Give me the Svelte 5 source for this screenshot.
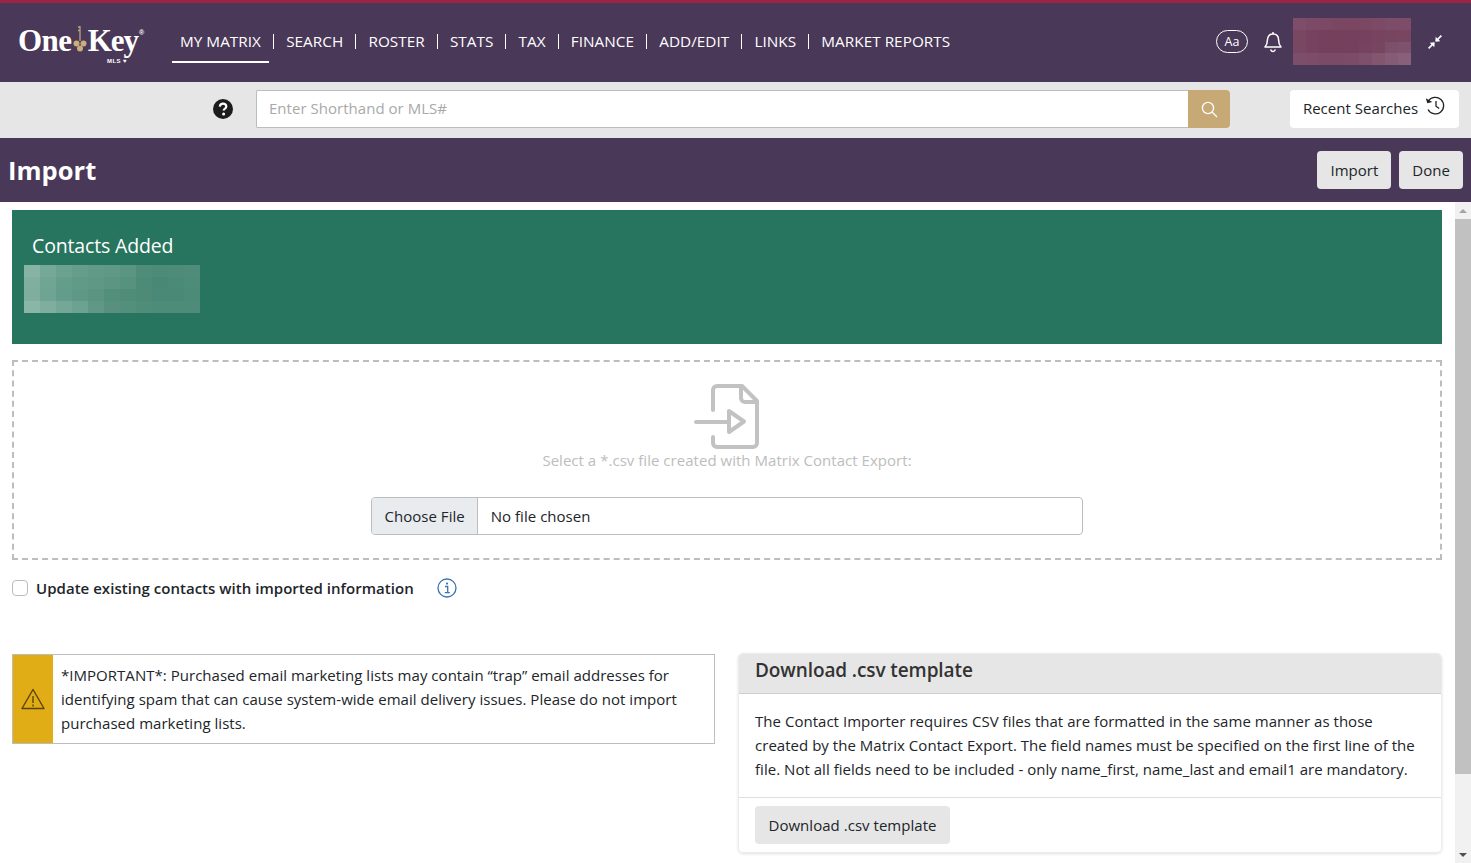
<script>
  const navItems = ['MY MATRIX', 'SEARCH', 'ROSTER', 'STATS', 'TAX', 'FINANCE', 'ADD/EDIT', 'LINKS', 'MARKET REPORTS'];

  // the redacted areas of the page are pixelated blocks, so draw them as a coarse mosaic
  const greenRows = [
    ['#86b3a4', '#76a898', '#6aa18f', '#659c8a', '#629a88', '#5f9885', '#5a9581', '#4f8d79', '#4c8b77', '#4e8c79', '#4f8d7a'],
    ['#80ae9f', '#70a493', '#659d8b', '#629a88', '#5f9986', '#5c9683', '#56927e', '#4c8b77', '#498974', '#4b8a76', '#4d8c78'],
    ['#7fae9e', '#6fa392', '#639c8a', '#5f9986', '#5b9582', '#53907c', '#4f8d79', '#4d8b77', '#4a8975', '#4a8975', '#4c8b77'],
    ['#8ab6a8', '#7fae9f', '#75a796', '#6ca291', '#5f9885', '#588f7e', '#53907c', '#4f8d79', '#4d8c78', '#4d8c78', '#4e8c79']
  ];
  const plumRows = [
    ['#7d4d69', '#7b4a66', '#7b4965', '#7a4763', '#7a4662', '#7b4864', '#7c4a66', '#7d4d68', '#7c4c68'],
    ['#7a4763', '#77425f', '#75405d', '#74405c', '#75405d', '#76415e', '#77435f', '#784561', '#794662'],
    ['#7a4763', '#77425f', '#75405d', '#74405c', '#75405d', '#77425f', '#784561', '#7c4f6b', '#7e526d'],
    ['#7d4e6a', '#7c4c68', '#7b4a66', '#7b4a66', '#7c4b67', '#7e506b', '#82566f', '#855b75', '#886079']
  ];
</script>

<div class="page">
  <nav class="topnav">
    <div class="logo">
      <span>One</span>
      <svg class="key" width="16" height="30" viewBox="1 0 16 30" aria-hidden="true">
        <path d="M9 1v15M7 2h2M7 5.500h2" stroke="#b9a47c" stroke-width="1.300" fill="none" />
        <circle cx="5.500" cy="18.500" r="3" fill="#c9ae7c" />
        <circle cx="12.500" cy="18.500" r="3" fill="#c9ae7c" />
        <circle cx="9" cy="23.500" r="3" fill="#c9ae7c" />
      </svg>
      <span class="key-word">Key</span>
      <span class="reg">®</span>
      <span class="mls">MLS ♥</span>
    </div>
    <ul class="menu">
      {#each navItems as item, i}
        <li class:active={i === 0}><span>{item}</span></li>
      {/each}
    </ul>
    <div class="nav-right">
      <span class="aa">Aa</span>
      <svg class="bell" width="20" height="22" viewBox="0 0 20 22" fill="none" stroke="#fff" stroke-width="1.500" aria-hidden="true">
        <path d="M10 3c-3.600 0-5.600 2.600-5.600 6 0 4-.9 5.400-2.400 7h16c-1.500-1.600-2.400-3-2.400-7 0-3.400-2-6-5.600-6z" stroke-linejoin="round" />
        <path d="M10 1v2" />
        <path d="M7.600 18.500c.5 1.300 1.400 2 2.400 2s1.900-.7 2.400-2" />
      </svg>
      <div class="mosaic avatar-blur">
        {#each plumRows as row}
          {#each row as c}
            <i style="background:{c}"></i>
          {/each}
        {/each}
      </div>
      <svg class="collapse" width="16" height="16" viewBox="0 0 16 16" fill="#fff" aria-hidden="true">
        <path d="M15 2.200 13.800 1 10.400 4.400 8.700 2.800 8.300 7.700 13.200 7.300 11.600 5.600z" />
        <path d="M1 13.800 2.200 15 5.600 11.600 7.300 13.200 7.700 8.300 2.800 8.700 4.400 10.400z" />
      </svg>
    </div>
  </nav>

  <div class="searchbar">
    <svg class="help" width="20" height="20" viewBox="0 0 20 20" aria-hidden="true">
      <circle cx="10" cy="10" r="10" fill="#1c1c1c" />
      <path d="M6.800 7.600c.2-1.900 1.500-2.900 3.300-2.900 1.900 0 3.200 1.100 3.200 2.700 0 1.300-.8 1.900-1.600 2.500-.7.500-1 .8-1 1.600" fill="none" stroke="#fff" stroke-width="2.200" />
      <circle cx="10.600" cy="15" r="1.500" fill="#fff" />
    </svg>
    <div class="search-group">
      <input type="text" placeholder="Enter Shorthand or MLS#" />
      <button type="button" class="search-btn" aria-label="Search">
        <svg width="17" height="17" viewBox="0 0 17 17" fill="none" stroke="#fff" stroke-width="1.300" aria-hidden="true">
          <circle cx="7" cy="7" r="5.600" />
          <path d="M11 11l5 5" />
        </svg>
      </button>
    </div>
    <button type="button" class="recent">
      Recent Searches
      <svg width="22" height="20" viewBox="0 0 22 20" fill="none" stroke="#222" stroke-width="1.300" aria-hidden="true">
        <path d="M4.300 5.200A8.300 8.300 0 1 1 4 13.500" />
        <path d="M1.800 2.200 3.300 7.300 8.300 6z" fill="#222" stroke="none" />
        <path d="M12 5v5.200l3.200 2.400" />
      </svg>
    </button>
  </div>

  <header class="pagehead">
    <h1>Import</h1>
    <div class="head-actions">
      <button type="button">Import</button>
      <button type="button">Done</button>
    </div>
  </header>

  <div class="scroller">
    <main class="content">
      <section class="added">
        <h2>Contacts Added</h2>
        <div class="mosaic added-blur">
          {#each greenRows as row}
            {#each row as c}
              <i style="background:{c}"></i>
            {/each}
          {/each}
        </div>
      </section>

      <section class="dropzone">
        <svg class="file-icon" width="66" height="66" viewBox="0 0 66 66" fill="none" stroke="#c2c2c2" stroke-width="4" stroke-linejoin="round" stroke-linecap="round" aria-hidden="true">
          <path d="M19 26V6a4 4 0 0 1 4-4h25l15 15v42a4 4 0 0 1-4 4H23a4 4 0 0 1-4-4v-6" />
          <path d="M47 2v12a4 4 0 0 0 4 4h12" />
          <path d="M2 38h32" />
          <path d="M35 27v21l15-10.500z" />
        </svg>
        <p>Select a *.csv file created with Matrix Contact Export:</p>
        <div class="filepicker">
          <span class="choose">Choose File</span>
          <span class="chosen">No file chosen</span>
        </div>
      </section>

      <div class="update-row">
        <span class="check"></span>
        <span class="update-label">Update existing contacts with imported information</span>
        <svg width="20" height="20" viewBox="0 0 20 20" aria-hidden="true">
          <circle cx="10" cy="10" r="9" fill="none" stroke="#3a72b5" stroke-width="1.300" />
          <circle cx="10" cy="5.600" r="1.100" fill="#3a72b5" />
          <path d="M8 8.500h2.700v6M7.800 14.700h5" fill="none" stroke="#3a72b5" stroke-width="1.300" />
        </svg>
      </div>

      <div class="columns">
        <div class="warning">
          <div class="warn-side">
            <svg width="24" height="22" viewBox="0 0 24 22" fill="none" stroke="#5b430c" stroke-width="1.400" stroke-linejoin="round" aria-hidden="true">
              <path d="M12 1.500 1 20.500h22z" />
              <path d="M12 8v7M12 16.500v2" />
            </svg>
          </div>
          <p>*IMPORTANT*: Purchased email marketing lists may contain “trap” email addresses for identifying spam that can cause system-wide email delivery issues. Please do not import purchased marketing lists.</p>
        </div>

        <div class="card">
          <h3>Download .csv template</h3>
          <p>The Contact Importer requires CSV files that are formatted in the same manner as those created by the Matrix Contact Export. The field names must be specified on the first line of the file. Not all fields need to be included - only name_first, name_last and email1 are mandatory.</p>
          <div class="card-foot">
            <button type="button">Download .csv template</button>
          </div>
        </div>
      </div>
    </main>

    <div class="scrollbar">
      <span class="arrow up"></span>
      <div class="track"><div class="thumb"></div></div>
      <span class="arrow down"></span>
    </div>
  </div>
</div>

<style>
  :global(body) {
    margin: 0;
    background: #fff;
    overflow: hidden;
  }
  .page {
    height: 863px;
    display: flex;
    flex-direction: column;
    font-family: "Open Sans", "Noto Sans", "Liberation Sans", sans-serif;
    font-size: 15px;
    color: #212529;
    letter-spacing: 0.03px;
  }
  button {
    font: inherit;
    letter-spacing: inherit;
    cursor: pointer;
  }
  .mosaic {
    display: grid;
    grid-template-rows: repeat(4, 1fr);
    flex: none;
  }
  .mosaic i {
    display: block;
  }

  /* top nav */
  .topnav {
    height: 79px;
    flex: none;
    border-top: 3px solid #9c2542;
    background: #4a3858;
    display: flex;
    align-items: center;
    color: #fff;
  }
  .logo {
    position: relative;
    width: 172px;
    padding-left: 18px;
    box-sizing: border-box;
    display: flex;
    align-items: center;
    font-family: "Liberation Serif", serif;
    font-weight: 700;
    font-size: 31px;
    line-height: 26px;
    letter-spacing: -0.5px;
    height: 40px;
    margin-bottom: 4px;
  }
  .key {
    margin: -2px 0 0;
    flex: none;
  }
  .key-word {
    letter-spacing: -1px;
  }
  .reg {
    font-size: 7px;
    line-height: 8px;
    align-self: flex-start;
    margin: 8px 0 0 1px;
    font-family: "Liberation Sans", sans-serif;
  }
  .mls {
    position: absolute;
    left: 107px;
    top: 37px;
    font-family: "Liberation Sans", sans-serif;
    font-size: 6px;
    line-height: 6px;
    letter-spacing: 0.4px;
  }
  .menu {
    list-style: none;
    margin: 0;
    padding: 0;
    display: flex;
    flex: 1;
    align-items: center;
  }
  .menu li {
    height: 40px;
    margin-top: 1px;
    padding: 0 8px 5px;
    box-sizing: border-box;
    display: flex;
    align-items: center;
    position: relative;
    margin-right: 9.200px;
    font-size: 15.300px;
    white-space: nowrap;
  }
  .menu li:not(:last-child)::after {
    content: "";
    position: absolute;
    right: -5px;
    top: 11px;
    height: 15px;
    width: 1px;
    background: #fff;
  }
  .menu li.active {
    border-bottom: 2px solid #fff;
    padding-bottom: 3px;
  }
  .nav-right {
    display: flex;
    align-items: center;
    padding-right: 28px;
    margin-bottom: 2px;
  }
  .aa {
    width: 32px;
    height: 23px;
    box-sizing: border-box;
    border: 1px solid #fff;
    border-radius: 12px;
    display: flex;
    align-items: center;
    justify-content: center;
    font-size: 12.500px;
  }
  .bell {
    margin-left: 15px;
  }
  .avatar-blur {
    width: 118px;
    height: 47px;
    margin-left: 10px;
    grid-template-columns: repeat(9, 1fr);
  }
  .collapse {
    margin-left: 16px;
  }

  /* search row */
  .searchbar {
    height: 56px;
    flex: none;
    background: #e6e6e6;
    display: flex;
    align-items: center;
    padding: 0 12px 2px 213px;
    box-sizing: border-box;
  }
  .help {
    flex: none;
  }
  .search-group {
    margin-left: 23px;
    width: 974px;
    height: 38px;
    display: flex;
  }
  .search-group input {
    flex: 1;
    min-width: 0;
    box-sizing: border-box;
    border: 1px solid #bdbdbd;
    border-right: none;
    border-radius: 2px 0 0 2px;
    padding: 0 12px 2px;
    font: inherit;
    letter-spacing: inherit;
    outline: none;
    background: #fff;
  }
  .search-group input::placeholder {
    color: #a9a9a9;
    opacity: 1;
  }
  .search-btn {
    width: 42px;
    border: none;
    background: #c6a975;
    border-radius: 0 4px 4px 0;
    padding: 0;
    display: flex;
    align-items: center;
    justify-content: center;
  }
  .recent {
    margin-left: auto;
    width: 169px;
    height: 38px;
    border: none;
    background: #fff;
    border-radius: 4px;
    color: #212529;
    display: flex;
    align-items: center;
    justify-content: center;
    gap: 6px;
    padding: 0 0 3px;
  }
  .recent svg {
    margin-top: -3px;
  }

  /* page header */
  .pagehead {
    height: 64px;
    flex: none;
    background: #4a3858;
    display: flex;
    align-items: center;
    justify-content: space-between;
    padding: 0 8px;
    box-sizing: border-box;
  }
  h1 {
    margin: 0;
    font-size: 25.500px;
    font-weight: 700;
    color: #fff;
  }
  .head-actions {
    display: flex;
    gap: 8px;
  }
  .head-actions button {
    height: 38px;
    padding: 0 13px 1px;
    border: none;
    border-radius: 4px;
    background: #e6e6e6;
    color: #212529;
  }

  /* body */
  .scroller {
    flex: 1;
    min-height: 0;
    display: flex;
    overflow: hidden;
  }
  .content {
    flex: 1;
    min-width: 0;
    padding: 8px 13px 0 12px;
    box-sizing: border-box;
  }
  .added {
    background: #27755e;
    height: 134px;
    color: #fff;
    padding: 24px 12px 0;
    box-sizing: border-box;
  }
  .added h2 {
    margin: 0 0 7px 8px;
    font-size: 19.500px;
    line-height: 24px;
    font-weight: 400;
    letter-spacing: -0.15px;
  }
  .added-blur {
    width: 176px;
    height: 48px;
    grid-template-columns: repeat(11, 1fr);
  }
  .dropzone {
    margin-top: 16px;
    height: 200px;
    box-sizing: border-box;
    border: 2px dashed #bdbdbd;
    display: flex;
    flex-direction: column;
    align-items: center;
    padding-top: 22px;
  }
  .file-icon {
    flex: none;
  }
  .dropzone p {
    margin: -2px 0 0;
    line-height: 24px;
    color: #bdbdbd;
  }
  .filepicker {
    margin-top: 25px;
    width: 712px;
    height: 38px;
    box-sizing: border-box;
    border: 1px solid #bdbdbd;
    border-radius: 4px;
    display: flex;
    align-items: center;
    overflow: hidden;
  }
  .choose {
    height: 100%;
    padding: 0 12.500px;
    display: flex;
    align-items: center;
    background: #e9ecef;
    border-right: 1px solid #bdbdbd;
  }
  .chosen {
    padding-left: 12.500px;
  }
  .update-row {
    margin-top: 17px;
    height: 22px;
    display: flex;
    align-items: center;
  }
  .check {
    width: 16px;
    height: 16px;
    box-sizing: border-box;
    border: 1px solid #bdbdbd;
    border-radius: 4px;
    margin-right: 8px;
    flex: none;
  }
  .update-label {
    font-weight: 600;
    margin-right: 23px;
  }
  .columns {
    margin-top: 55px;
    display: grid;
    grid-template-columns: 703px 704px;
    gap: 23px;
    align-items: start;
  }
  .warning {
    height: 90px;
    box-sizing: border-box;
    border: 1px solid #bdbdbd;
    display: flex;
  }
  .warn-side {
    width: 40px;
    flex: none;
    background: #e0ad16;
    display: flex;
    align-items: center;
    justify-content: center;
  }
  .warning p {
    margin: 0;
    padding: 8px 20px 0 8px;
    line-height: 24px;
  }
  .card {
    border-radius: 5px;
    border: 1px solid #ececec;
    box-shadow: 0 1px 3px rgba(0, 0, 0, 0.12);
    overflow: hidden;
    margin-top: -1px;
  }
  .card h3 {
    margin: 0;
    height: 39px;
    background: #e6e6e6;
    border-bottom: 1px solid #cfcfcf;
    padding: 0 16px;
    font-size: 19px;
    font-weight: 600;
    line-height: 32px;
    letter-spacing: -0.1px;
    color: #333;
  }
  .card p {
    margin: 0;
    padding: 15px 16px 16px;
    line-height: 24px;
  }
  .card-foot {
    border-top: 1px solid #dedede;
    padding: 8px 16px;
  }
  .card-foot button {
    height: 38px;
    padding: 0 13.500px;
    border: none;
    border-radius: 4px;
    background: #e6e6e6;
    color: #212529;
  }

  /* fake native scrollbar */
  .scrollbar {
    width: 16px;
    flex: none;
    background: #f1f1f1;
    display: flex;
    flex-direction: column;
  }
  .arrow {
    height: 17px;
    flex: none;
    display: flex;
    align-items: center;
    justify-content: center;
  }
  .arrow::before {
    content: "";
    border-left: 4px solid transparent;
    border-right: 4px solid transparent;
  }
  .arrow.up::before {
    border-bottom: 4px solid #a3a3a3;
  }
  .arrow.down::before {
    border-top: 4px solid #505050;
  }
  .track {
    flex: 1;
  }
  .thumb {
    height: 555px;
    background: #c1c1c1;
  }
</style>
